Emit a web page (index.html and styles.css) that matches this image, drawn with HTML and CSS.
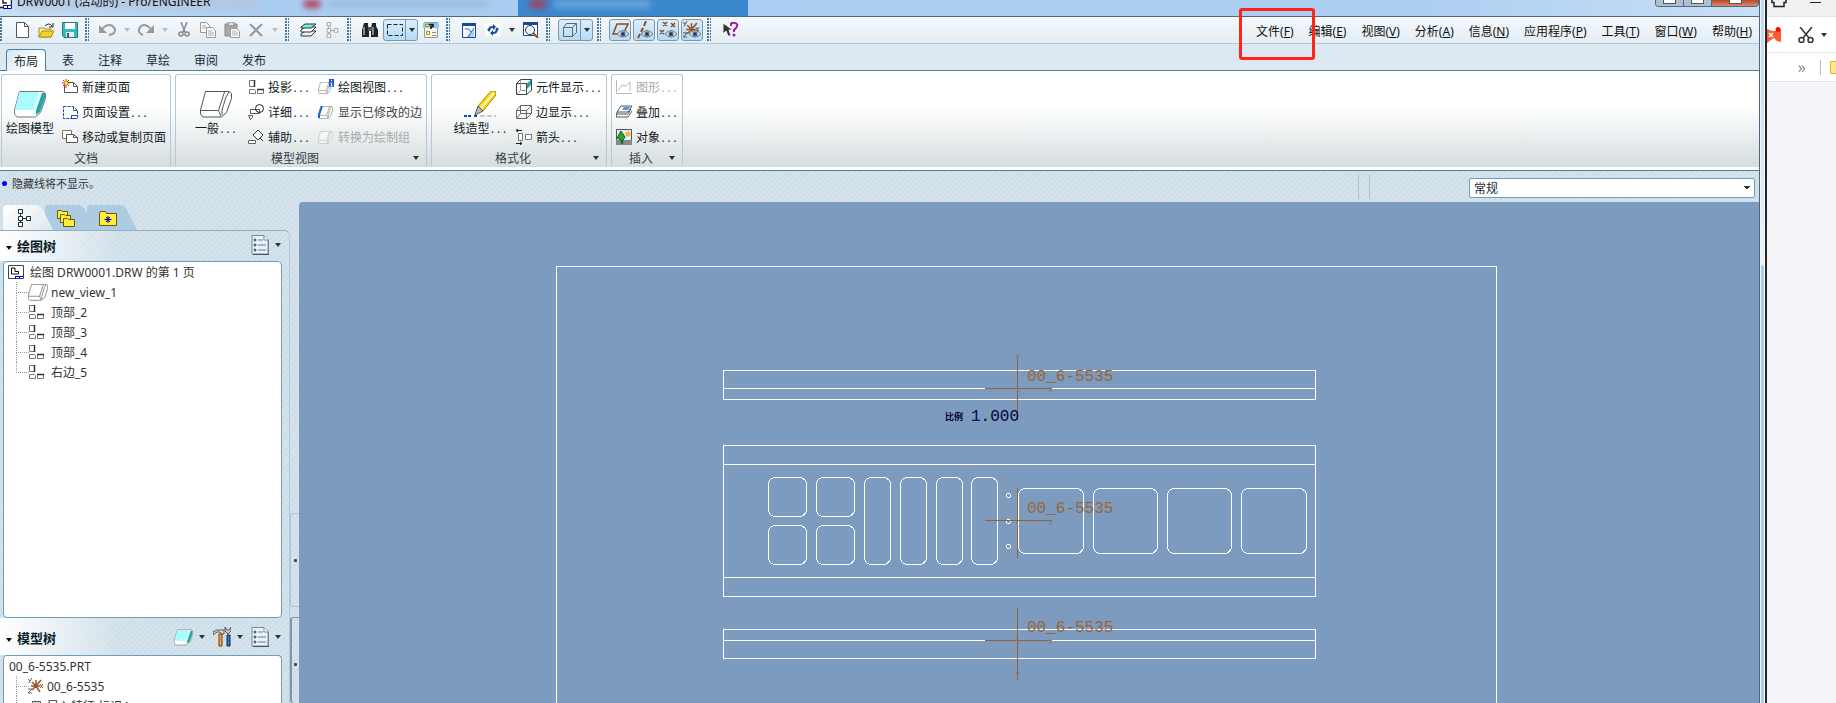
FILE: index.html
```html
<!DOCTYPE html>
<html lang="zh-CN">
<head>
    <meta charset="UTF-8">
    <meta name="viewport" content="width=device-width, initial-scale=1.0">
    <title>DRW0001 (活动的) - Pro/ENGINEER</title>
    <link rel="stylesheet" href="styles.css">
</head>

<body>
    <!-- Shared icons -->
    <svg class="defs" aria-hidden="true">
        <symbol id="i-view" viewBox="0 0 16 16">
            <g fill="#fff" stroke="#777"><path d="M1.500 1.500h5v6h-5z"/><path d="M1.500 10.500h5l1 1v3h-6z"/><path d="M9.500 10.500h6v4h-6z"/></g>
            <path d="M6.500 1v7M9 10.500h7" stroke="#333" stroke-width="1.500" fill="none"/>
        </symbol>
        <symbol id="i-block" viewBox="0 0 32 27">
            <path d="M5.500.5H29l2.500 2v5l-5 14-5 4.500H3L.5 23v-4z" fill="#fff" stroke="#555"/>
            <path d="M.5 19.500h18l2.500 6M24.500 1l-6 18.500M29 1l-3 5-4 13v5" fill="none" stroke="#555"/>
        </symbol>
        <symbol id="i-solid" viewBox="0 0 32 27">
            <path d="M5.500.5H29l2.500 2v5l-5 14-5 4.500H3L.5 23v-4z" fill="#fff" stroke="#777"/>
            <path d="M5.500 1H25l-6 18H1z" fill="#a9fbfd"/>
            <path d="M28 2h3v5l-5 14-4 3v-5z" fill="#22a8a8"/>
            <path d="M26.500 2l-6 18 1 4" fill="none" stroke="#d7ffff" stroke-width="2"/>
        </symbol>
        <symbol id="i-list" viewBox="0 0 18 20">
            <path d="M1 .5h12l4 4V19H1z" fill="#e9f2fc" stroke="#789"/>
            <path d="M13 .5V5h4" fill="#fff" stroke="#789"/>
            <path d="M7 5h5M7 10h8M7 15h8" stroke="#678"/>
            <g fill="#fff" stroke="#234"><circle cx="4" cy="5" r="1"/><circle cx="4" cy="10" r="1"/><circle cx="4" cy="15" r="1"/></g>
            <path d="M2 19.500h16V5" fill="none" stroke="#456"/>
        </symbol>
        <symbol id="i-eye" viewBox="0 0 12 8">
            <path d="M0 4q6-7 12 0-6 6-12 0z" fill="#ddd" stroke="#777"/><circle cx="6" cy="4" r="2.500" fill="#3b6b9c"/><circle cx="6" cy="4" r="1" fill="#123"/>
        </symbol>
        <symbol id="i-csys" viewBox="0 0 16 16">
            <path d="M8 8V2M8 8l5-6M3 8h9M8 8l4 6M8 8l-4 4M8 8L4 4" stroke="#9a5523" stroke-width="1.500"/>
            <path d="M0 1l2 2 2-3M2 3l-1 2M12 6l3 4m0-4l-3 4M0 11h4l-4 4h4" stroke="#666" fill="none"/>
        </symbol>
        <symbol id="i-tree" viewBox="0 0 16 18">
            <path d="M4.500 4v10M4 9.500h7" stroke="currentColor"/>
            <g fill="#fff" stroke="currentColor"><path d="M2.500.5h4v4h-4zM2.500 7.500h4v4h-4zM2.500 13.500h4v4h-4zM10.500 7.500h4v4h-4z"/></g>
        </symbol>
    </svg>

    <div class="app">
        <header class="title-bar">
            <div class="glass" aria-hidden="true">
                <i class="smudge"></i><i class="red"></i><i class="words"></i>
                <div class="glass-tab"><i class="red"></i><i class="words"></i></div>
            </div>
            <svg width="12" height="9" viewBox="0 0 12 9"><path d="M0 0h11v7H0z" fill="#fff"/><path d="M0 7.500h4M11.500 0v5M3 0v3h4" stroke="#222" stroke-width="1.500" fill="none"/><path d="M3.500 5.500h8v3h-8zM7.500 5v3" fill="#fff" stroke="#00c"/></svg>
            <h1>DRW0001 (活动的) - Pro/ENGINEER</h1>
            <div class="window-buttons">
                <button aria-label="最小化"></button>
                <button aria-label="最大化"></button>
                <button class="close" aria-label="关闭"></button>
            </div>
        </header>

        <div class="toolbar">
            <span class="grip first"></span>
            <button aria-label="新建"><svg width="16" height="16"><path d="M2.500.5h8l4 4v11h-12z" fill="#fff" stroke="#555"/><path d="M10.500.5v4h4" fill="none" stroke="#555"/></svg></button>
            <button aria-label="打开"><svg width="16" height="16"><path d="M1 6h5l1 1h6v8H1z" fill="#fff3a0" stroke="#a88a20"/><path d="M4 9h12l-3 6H1z" fill="#f3d420" stroke="#a88a20"/><path d="M7 4q4-4 7 0m1-3v4h-4" fill="none" stroke="#222"/></svg></button>
            <button aria-label="保存"><svg width="16" height="16"><path d="M.5.5h15v15H2l-1.500-2z" fill="#35b9c0" stroke="#33767b"/><path d="M3 1h10v6H3z" fill="#fff"/><path d="M4 10h8v5H4z" fill="#e8eeee"/><path d="M5 11h2v4H5z" fill="#266"/></svg></button>
            <span class="grip"></span>
            <button aria-label="撤消"><svg width="18" height="14"><path d="M3 6q8-8 13 0 1 5-6 6" fill="none" stroke="#999" stroke-width="2"/><path d="M0 2v8h8z" fill="#999"/></svg></button>
            <button class="drop off" aria-label="撤消列表"></button>
            <button aria-label="重做"><svg width="18" height="14"><path d="M14 6Q6-2 2 6q-1 4 4 6" fill="none" stroke="#999" stroke-width="2"/><path d="M17 2v8H9z" fill="#999"/></svg></button>
            <button class="drop off" aria-label="重做列表"></button>
            <button aria-label="剪切"><svg width="16" height="16"><path d="M5 0l4 10M11 0L7 10" stroke="#888" stroke-width="1.500"/><g fill="none" stroke="#888" stroke-width="1.500"><circle cx="5" cy="12" r="2"/><circle cx="11" cy="12" r="2"/></g></svg></button>
            <button aria-label="复制"><svg width="16" height="16"><g fill="#fafafa" stroke="#999"><path d="M.5.5h6l3 3v7h-9z"/><path d="M6.500 5.500h6l3 3v7h-9z"/></g><path d="M2 4h4M2 6h5M8 9h4M8 11h6M8 13h6" stroke="#aaa"/></svg></button>
            <button aria-label="粘贴"><svg width="16" height="16"><path d="M1 2h12v12H1z" fill="#aaa" stroke="#888"/><path d="M4 0h6v4H4z" fill="#ddd" stroke="#888"/><path d="M6.500 6.500h6l3 3v6h-9z" fill="#fff" stroke="#999"/><path d="M8 9h4M8 11h6M8 13h6" stroke="#aaa"/></svg></button>
            <button aria-label="删除"><svg width="16" height="16"><path d="M2 2l12 12M14 2L2 14" stroke="#999" stroke-width="2"/></svg></button>
            <button class="drop off" aria-label="删除列表"></button>
            <span class="grip"></span>
            <button aria-label="层"><svg width="16" height="16"><g stroke="#333"><path d="M1 12l4-3h11l-5 5H1z" fill="#eee"/><path d="M1 8l4-3h11l-5 5H1z" fill="#fff"/><path d="M1 5l4-3h11l-5 4H1z" fill="#6ff0f0"/></g></svg></button>
            <button class="grey" aria-label="模型树"><svg width="16" height="16"><use href="#i-tree"/></svg></button>
            <span class="grip"></span>
            <button aria-label="查找"><svg width="18" height="16"><path d="M3 1h4v3l1 3v8H1V8zM11 1h4v3l2 4v7h-7V7z" fill="#222"/><path d="M7 5h4v4H7z" fill="#555"/><path d="M3 5v8M12 5v8" stroke="#eee"/></svg></button>
            <div class="pressed split">
                <button aria-label="选取框"><svg width="16" height="12"><path d="M.5.5h15v11H.5z" fill="none" stroke="#222" stroke-dasharray="4 2"/></svg></button>
                <button class="drop" aria-label="选取列表"></button>
            </div>
            <button aria-label="过滤器"><svg width="16" height="16"><path d="M1.500.5h13v15h-13z" fill="#f4f4ee" stroke="#999"/><path d="M0 1h16v5H0z" fill="#8ecbfa"/><path d="M6 2.500h4v2H8V7" fill="none" stroke="#111" stroke-width="1.500"/><path d="M2.500 2.500h3v2h-3zM3.500 9.500h3v3h-3z" fill="#ff5" stroke="#a90"/><path d="M9 10.500h4M9 13.500h4" stroke="#888"/></svg></button>
            <span class="grip"></span>
            <button aria-label="重画"><svg width="16" height="16"><path d="M1.500 1.500h13v14h-13z" fill="#f2faff" stroke="#1b4699"/><path d="M1 1h14v3H1z" fill="#1b4699"/><path d="M13 6v9H6z" fill="#9ed6f5"/><path d="M13 6L7 15M4 7h4l2 3" stroke="#3b65bd" fill="none"/></svg></button>
            <button aria-label="刷新"><svg width="16" height="16"><path d="M0 1h16v13H0z" fill="#fffff2"/><path d="M4 8q0-3 4-3M12 7q0 4-4 4" fill="none" stroke="#124caa" stroke-width="2"/><path d="M8 2l3 3-3 3zM8 8l-3 3 3 3zM2 7h4l-2 3zM10 8h4l-2-3z" fill="#124caa"/></svg></button>
            <button class="drop" aria-label="刷新列表"></button>
            <button aria-label="重新调整"><svg width="16" height="16"><path d="M.5.5h14v13H.5z" fill="#fff" stroke="#1b4699"/><path d="M0 0h15v3H0z" fill="#1b4699"/><circle cx="7" cy="8" r="4.500" fill="#edf7fb" stroke="#333"/><path d="M10 11l5 5" stroke="#8b5520" stroke-width="2"/></svg></button>
            <span class="grip"></span>
            <div class="pressed split">
                <button aria-label="隐藏线"><svg width="16" height="14"><path d="M1.500 4.500h9v9h-9zM1.500 4.500l3-4h10l-4 4M14.500.5v9l-4 4" fill="none" stroke="#666"/></svg></button>
                <button class="drop" aria-label="显示列表"></button>
            </div>
            <span class="grip"></span>
            <button class="pressed" aria-label="基准平面"><svg width="18" height="18"><path d="M6 3h11l-5 10H2z" fill="none" stroke="#8d4b20" stroke-width="1.500"/><use href="#i-eye" x="6" y="9" width="12" height="8"/></svg></button>
            <button class="pressed" aria-label="基准轴"><svg width="18" height="18"><path d="M11 0l-2 5M8 7L6 11M5 13l-2 4" stroke="#8d4b20" stroke-width="2"/><use href="#i-eye" x="6" y="9" width="12" height="8"/></svg></button>
            <button class="pressed" aria-label="基准点"><svg width="18" height="18"><path d="M4 1l4 4m0-4L4 5M12 2l4 4m0-4l-4 4M1 9l4 4m0-4l-4 4" stroke="#8d4b20" stroke-width="1.500"/><use href="#i-eye" x="6" y="9" width="12" height="8"/></svg></button>
            <button class="pressed" aria-label="坐标系"><svg width="18" height="18"><use href="#i-csys" width="17" height="17"/><use href="#i-eye" x="6" y="9" width="12" height="8"/></svg></button>
            <span class="grip"></span>
            <button aria-label="帮助"><svg width="18" height="16"><path d="M2 1v11l3-3 2 5h3L8 8h4z" fill="#333" stroke="#eee"/><path d="M10 4V2q1-2 4-1 4 1 1 5l-2 2v2" fill="none" stroke="#a515a5" stroke-width="2"/><circle cx="13" cy="13" r="1.500" fill="#a515a5"/></svg></button>

            <nav class="menu">
                <a href="#" class="marked">文件(<u>F</u>)</a>
                <a href="#">编辑(<u>E</u>)</a>
                <a href="#">视图(<u>V</u>)</a>
                <a href="#">分析(<u>A</u>)</a>
                <a href="#">信息(<u>N</u>)</a>
                <a href="#">应用程序(<u>P</u>)</a>
                <a href="#">工具(<u>T</u>)</a>
                <a href="#">窗口(<u>W</u>)</a>
                <a href="#">帮助(<u>H</u>)</a>
            </nav>
        </div>

        <div class="tabs">
            <button class="active">布局</button>
            <button>表</button>
            <button>注释</button>
            <button>草绘</button>
            <button>审阅</button>
            <button>发布</button>
        </div>

        <div class="ribbon">
            <section class="group doc">
                <div class="tools">
                    <button class="big"><svg width="32" height="27"><use href="#i-solid"/></svg><span>绘图模型</span></button>
                    <div class="col">
                        <button><svg width="16" height="16"><path d="M2.500 3.500h9l4 4v6h-13z" fill="#fff" stroke="#555"/><path d="M11.500 3.500v4h4" fill="none" stroke="#555"/><path d="M4 0v9M0 4h8M1 1l6 6M7 1L1 7" stroke="#c30"/><path d="M2.500 2.500h3v3h-3z" fill="#fe3"/></svg><span>新建页面</span></button>
                        <button><svg width="16" height="16"><path d="M1.500 2.500h10l4 4v8h-14z" fill="#fff" stroke="#1c49ae" stroke-dasharray="3 1"/><path d="M11.500 2.500v4h4" fill="none" stroke="#555"/><path d="M15 14.500H9.500v-3h6" fill="none" stroke="#1c49ae"/></svg><span>页面设置<span class="dots">...</span></span></button>
                        <button><svg width="16" height="16"><path d="M.5 1.500h9v8h-9z" fill="#fffde5" stroke="#777"/><path d="M4.500 5.500h7l4 3v5h-11z" fill="#fff" stroke="#555"/><path d="M11.500 5.500v3h4" fill="none" stroke="#555"/></svg><span>移动或复制页面</span></button>
                    </div>
                </div>
                <footer><h2>文档</h2></footer>
            </section>

            <section class="group views">
                <div class="tools">
                    <button class="big"><svg width="32" height="27"><use href="#i-block"/></svg><span>一般<span class="dots">...</span></span></button>
                    <div class="col">
                        <button><svg width="16" height="16"><use href="#i-view"/></svg><span>投影<span class="dots">...</span></span></button>
                        <button><svg width="16" height="16"><path d="M2.500 5.500h9v4h-9zM.5 11.500h4v2l-2 2z" fill="#fff" stroke="#555"/><circle cx="11.500" cy="4.500" r="4" fill="none" stroke="#222"/></svg><span>详细<span class="dots">...</span></span></button>
                        <button><svg width="16" height="16"><path d="M.5 11.500h7v3h-7z" fill="#fff" stroke="#666"/><path d="M10 1l5 5-5 5-5-5zM12 9l3 3" fill="#fff" stroke="#333"/></svg><span>辅助<span class="dots">...</span></span></button>
                    </div>
                    <div class="col">
                        <button><svg width="16" height="16"><use href="#i-block" y="3" width="14" height="12"/><path d="M11 0h5v8h-5z" fill="#215ec9"/><path d="M13.500 1v1m-1 2h1v3m-1 0h2" stroke="#fff" fill="none"/></svg><span>绘图视图<span class="dots">...</span></span></button>
                        <button class="dim"><svg width="16" height="16"><use href="#i-block" y="2" width="15" height="13"/><path d="M4 2L1 11v3" fill="none" stroke="#16d" stroke-width="2"/></svg><span>显示已修改的边</span></button>
                        <button disabled><svg width="16" height="16"><use href="#i-block" y="2" width="15" height="13"/></svg><span>转换为绘制组</span></button>
                    </div>
                </div>
                <footer><h2>模型视图</h2><button class="drop" aria-label="更多"></button></footer>
            </section>

            <section class="group format">
                <div class="tools">
                    <button class="big"><svg width="32" height="27"><path d="M0 25h8M10 25h4" stroke="#124caa" stroke-width="2" stroke-dasharray="3 1"/><path d="M16 25h16" stroke="#999" stroke-dasharray="5 2"/><path d="M14 15L27 0h5v4L19 20z" fill="#f5d91a" stroke="#a8860b"/><path d="M17 17L30 2" stroke="#fffbb0" stroke-width="2"/><path d="M14 15l5 5-8 4z" fill="#bbb" stroke="#555"/></svg><span>线造型<span class="dots">...</span></span></button>
                    <div class="col">
                        <button><svg width="16" height="16"><path d="M.5 4.500h10v11H.5zM.5 4.500l4-4h11l-5 4v11l5-4V.5" fill="#fff" stroke="#444"/><path d="M5 1h10l-4 3H2z" fill="#fff"/><path d="M11 5l4-4v5l-4 4z" fill="#1ba8a8"/><path d="M4.500 1v10M4.500 11.500h6M.5 15.500l4-4" fill="none" stroke="#999"/></svg><span>元件显示<span class="dots">...</span></span></button>
                        <button><svg width="16" height="16"><path d="M.5 6.500h10v8H.5zM.5 6.500l4-5h11l-5 5v8l5-5v-8M4.500 1.500v8h11M.5 14.500l4-5" fill="none" stroke="#666"/></svg><span>边显示<span class="dots">...</span></span></button>
                        <button><svg width="16" height="16"><path d="M0 1.500h6M2 0L0 1.500 2 3M0 14.500h6M4 13l2 1.500L4 16" stroke="#222" fill="none"/><path d="M2.500 4.500h4v7h-4zM9.500 5.500h6v5h-6z" fill="#fff" stroke="#777"/></svg><span>箭头<span class="dots">...</span></span></button>
                    </div>
                </div>
                <footer><h2>格式化</h2><button class="drop" aria-label="更多"></button></footer>
            </section>

            <section class="group insert">
                <div class="tools">
                    <div class="col">
                        <button disabled><svg width="16" height="16"><path d="M.5 1v13.500H16M2 12l4-6 4 1 4-4v9" fill="none" stroke="#777"/></svg><span>图形<span class="dots">...</span></span></button>
                        <button><svg width="16" height="16"><path d="M5 2h11l-4 6H1z" fill="#fff" stroke="#555"/><path d="M8 3h6l-2 3H6z" fill="#4a9ae0"/><path d="M1 10h11l3-5M1 13h11l4-6M1 8l-1 6" fill="none" stroke="#555"/></svg><span>叠加<span class="dots">...</span></span></button>
                        <button><svg width="16" height="16"><path d="M.5.5h15v15H.5z" fill="#dceffb" stroke="#555"/><path d="M0 11h16v5H0z" fill="#888"/><path d="M5 2l4 6-2 3-1 4-1-4-4-2z" fill="#2ea42e" stroke="#125c12"/><circle cx="12" cy="5" r="2.500" fill="#ffb52b"/></svg><span>对象<span class="dots">...</span></span></button>
                    </div>
                </div>
                <footer><h2>插入</h2><button class="drop" aria-label="更多"></button></footer>
            </section>
        </div>

        <div class="status">
            <p>隐藏线将不显示。</p>
            <span class="sep"></span>
            <select aria-label="过滤器">
                <option>常规</option>
            </select>
        </div>

        <main>
            <aside>
                <div class="side-tabs">
                    <button class="active" aria-label="模型树"><svg width="18" height="18"><use href="#i-tree"/></svg></button>
                    <button aria-label="文件夹浏览器"><svg width="18" height="18"><g fill="#ffef38" stroke="#665a10"><path d="M.5 1.500h4l1 1h5v7H.5z"/><path d="M3.500 5.500h4l1 1h5v7h-10z"/><path d="M6.500 9.500h4l1 1h6v7h-11z"/></g></svg></button>
                    <button aria-label="收藏夹"><svg width="18" height="16"><path d="M.5 3.500l1-2h5l1 2h10v12H.5z" fill="#ffef38" stroke="#665a10"/><path d="M9 6v7M5.500 9.500h7M7 7l4 5M11 7l-4 5" stroke="#00a"/></svg></button>
                </div>
                <div class="side-body">
                    <div class="panel">
                        <div class="panel-head">
                            <h2>绘图树</h2>
                            <button class="with-drop" aria-label="设置"><svg width="18" height="20"><use href="#i-list"/></svg></button>
                        </div>
                        <div class="tree drawing">
                            <div class="root"><svg width="16" height="15"><path d="M.5.5h15v13H.5z" fill="#fff" stroke="#444"/><path d="M3.500 3v6h7V6.500H7V3z" fill="#fff" stroke="#111"/><path d="M7 11.500h8.500M7.500 11v3M11.500 11v3" stroke="#00c"/></svg>绘图 DRW0001.DRW 的第 1 页</div>
                            <ul>
                                <li><svg width="20" height="17"><use href="#i-block"/></svg>new_view_1</li>
                                <li><svg width="16" height="16"><use href="#i-view"/></svg>顶部_2</li>
                                <li><svg width="16" height="16"><use href="#i-view"/></svg>顶部_3</li>
                                <li><svg width="16" height="16"><use href="#i-view"/></svg>顶部_4</li>
                                <li><svg width="16" height="16"><use href="#i-view"/></svg>右边_5</li>
                            </ul>
                        </div>
                        <div class="panel-head second">
                            <h2>模型树</h2>
                            <button class="with-drop" aria-label="显示"><svg width="19" height="17"><use href="#i-solid"/></svg></button>
                            <button class="with-drop" aria-label="工具"><svg width="18" height="20"><path d="M0 5l4-2h7v4H9L7 5H4L0 8z" fill="#ddd" stroke="#555"/><path d="M6 7h3v12H6z" fill="#f0ad2a" stroke="#8b2b12"/><path d="M14 8h3v11h-3z" fill="#3b75d5" stroke="#124"/><path d="M12 0v4l3 3 3-3V0l-2 3h-2z" fill="#ccc" stroke="#555"/></svg></button>
                            <button class="with-drop" aria-label="设置"><svg width="18" height="20"><use href="#i-list"/></svg></button>
                        </div>
                        <div class="tree model">
                            <div class="root">00_6-5535.PRT</div>
                            <ul>
                                <li><svg width="16" height="16"><use href="#i-csys"/></svg>00_6-5535</li>
                                <li><svg width="16" height="16"><path d="M4.500 3.500h8v9h-8z" fill="#ddd" stroke="#555"/></svg>导入特征 标识4</li>
                            </ul>
                        </div>
                    </div>
                    <div class="splitter">
                        <span></span>
                        <span class="lower"></span>
                    </div>
                </div>
            </aside>

            <div class="canvas">
                <svg class="sheet" width="1460" height="501" viewBox="299 202 1460 501">
                    <g class="lines">
                        <path d="M556.500 720V266.500h940V720"/>
                        <path d="M723.500 370.500h592v29h-592zM723.500 388.500h592"/>
                        <path d="M723.500 445.500h592v151h-592zM723.500 464.500h592M723.500 577.500h592"/>
                        <path d="M723.500 629.500h592v29h-592zM723.500 640.500h592"/>
                        <rect x="768.500" y="477.500" width="38" height="39" rx="7"/>
                        <rect x="816.500" y="477.500" width="38" height="39" rx="7"/>
                        <rect x="768.500" y="525.500" width="38" height="39" rx="7"/>
                        <rect x="816.500" y="525.500" width="38" height="39" rx="7"/>
                        <rect x="864.500" y="477.500" width="26" height="87" rx="7"/>
                        <rect x="900.500" y="477.500" width="26" height="87" rx="7"/>
                        <rect x="936.500" y="477.500" width="26" height="87" rx="7"/>
                        <rect x="971.500" y="477.500" width="26" height="87" rx="7"/>
                        <rect x="1018.500" y="488.500" width="65" height="65" rx="7"/>
                        <rect x="1093.500" y="488.500" width="64" height="65" rx="7"/>
                        <rect x="1167.500" y="488.500" width="64" height="65" rx="7"/>
                        <rect x="1241.500" y="488.500" width="65" height="65" rx="7"/>
                        <circle cx="1008.500" cy="495.500" r="2"/>
                        <circle cx="1008.500" cy="521.500" r="2"/>
                        <circle cx="1008.500" cy="546.500" r="2"/>
                    </g>
                    <g class="axes">
                        <path d="M1017.500 356v64M985 388.500h67"/>
                        <path d="M1017.500 488v70M985 520.500h67"/>
                        <path d="M1017.500 608v72M985 640.500h67"/>
                        <path class="faint" d="M1016 354l1.500 3 2-3M1049 387l3 5m0-5l-3 5M1049 520l3 5m0-5l-3 5M1049 639l3 5m0-5l-3 5M1016 672l1.500 4 2-4M1016 387l3 5M1016 520l2 7M1016 638l3 6"/>
                    </g>
                    <g class="csys">
                        <text x="1027" y="381">00_6-5535</text>
                        <text x="1027" y="513">00_6-5535</text>
                        <text x="1027" y="632">00_6-5535</text>
                    </g>
                    <text class="scale-cjk" x="945" y="420">比例</text>
                    <text class="scale" x="971" y="421">1.000</text>
                </svg>
            </div>
        </main>
    </div>

    <div class="frame-edge"></div>

    <div class="browser">
        <div class="row top">
            <svg width="24" height="16"><path d="M5 0v2.500h2v4h10v-4h2V0" fill="none" stroke="#222" stroke-width="1.500"/></svg>
            <svg width="12" height="16"><path d="M1 2.500h11" stroke="#222"/></svg>
        </div>
        <div class="row apps">
            <svg width="16" height="16"><path d="M0 2l5 2h5l4-2v13l-4-1-3-3-3 2-4 3z" fill="#ff5a30"/><path d="M2 6l4 4m0-4l-4 4" stroke="#fff" stroke-width="1.500"/><circle cx="11" cy="2.500" r="2.500" fill="#e11"/></svg>
            <svg width="16" height="16"><path d="M2 0l9 11M14 0L5 11" stroke="#333" stroke-width="1.500"/><g fill="none" stroke="#333" stroke-width="1.500"><circle cx="3.500" cy="13" r="2.500"/><circle cx="12.500" cy="13" r="2.500"/></g></svg>
            <button class="drop" aria-label="更多"></button>
        </div>
        <div class="row marks">
            <span>»</span>
            <svg width="6" height="13"><path d="M.5.5H8v12H.5z" fill="#ffe98a" stroke="#f2b01e"/></svg>
        </div>
    </div>
</body>
</html>
```
FILE: styles.css
```css
* {
    box-sizing: border-box;
}

body {
    margin: 0;
    height: 100vh;
    display: flex;
    overflow: hidden;
    font-family: "Noto Sans", "Noto Sans CJK SC", sans-serif;
    font-size: 12px;
    color: #1c2a33;
}

h1, h2, p, ul {
    margin: 0;
    padding: 0;
    font-size: 12px;
    font-weight: normal;
}

button {
    font: inherit;
    color: inherit;
    padding: 0;
    border: none;
    background: none;
}

svg {
    flex: none;
    display: block;
}

.defs {
    position: absolute;
    width: 0;
    height: 0;
}

.app {
    flex: 1;
    min-width: 0;
    display: flex;
    flex-direction: column;
    background: #cfdfe9;
}

/* Title bar */
.title-bar {
    position: relative;
    height: 17px;
    display: flex;
    gap: 5px;
    border-bottom: 1px solid #53657a;
    background: linear-gradient(to right, #c8dff5, #a9cdf1 15%, #accef1 80%, #c9dff6);
    overflow: hidden;
}

.title-bar h1 {
    position: relative;
    flex: 1;
    line-height: 4px;
    color: #111;
}

.title-bar > svg {
    position: relative;
}

.glass {
    position: absolute;
    inset: 0 0 0 20px;
    display: flex;
    gap: 8px;
}

.glass i {
    height: 8px;
    filter: blur(3px);
}

.glass .smudge {
    width: 240px;
    margin-right: 36px;
    background: #b4c6dc;
}

.glass .red {
    width: 16px;
    background: #ad3c56;
}

.glass .words {
    width: 160px;
    margin-right: 22px;
    background: #9dbbdc;
}

.glass-tab {
    width: 230px;
    display: flex;
    gap: 8px;
    padding-left: 12px;
    background: #3b87cd;
}

.glass-tab .words {
    width: 96px;
    background: #6ba6dc;
}

.window-buttons {
    display: flex;
    height: 7px;
    border: 1px solid #536680;
    border-top: none;
    border-radius: 0 0 4px 4px;
    overflow: hidden;
}

.window-buttons button {
    width: 28px;
    background: #aebfd2;
    border-right: 1px solid #536680;
}

.window-buttons button::after {
    content: "";
    display: block;
    width: 11px;
    height: 3px;
    margin: 0 auto 3px;
    background: #fff;
    border: 1px solid #555;
    border-top: none;
}

.window-buttons .close {
    width: 46px;
    border-right: none;
    background: linear-gradient(#b4482f, #dc8a6d);
}

/* Toolbar */
.toolbar {
    height: 27px;
    display: flex;
    align-items: center;
    background: linear-gradient(#f4f9fc, #e4edf4);
    border-bottom: 1px solid #b6c8d3;
}

.toolbar > button {
    width: 24px;
    height: 22px;
    display: flex;
    align-items: center;
    justify-content: center;
}

.grip {
    width: 4px;
    height: 24px;
    margin: 0 7px 0 3px;
    background: radial-gradient(circle at 1px 1px, #47799f 1px, transparent 1px) 0 0 / 3px 3px;
}

.grip.first {
    margin-left: 0;
    width: 3px;
}

.grey {
    color: #999;
}

.toolbar > .drop {
    width: 14px;
}

.drop::after,
.with-drop::after {
    content: "";
    display: block;
    width: 0;
    margin: 0 auto;
    border: 3px solid transparent;
    border-top: 4px solid #333;
    border-bottom: none;
}

.drop.off::after {
    border-top-color: #bbb;
}

.pressed {
    border: 1px solid #7b98b0;
    border-radius: 3px;
    background: linear-gradient(#dceefb, #b4dbf6);
}

.toolbar > .pressed {
    width: 22px;
    margin: 0 1px;
}

.toolbar > .split {
    width: 35px;
    height: 22px;
    display: flex;
}

.split button {
    flex: 1;
    display: flex;
    align-items: center;
    justify-content: center;
}

.split .drop {
    flex: 0 0 12px;
    border-left: 1px solid #7b98b0;
}

.menu {
    margin-left: auto;
    padding: 3px 7px 0 0;
    display: flex;
    gap: 15px;
}

.menu a {
    position: relative;
    color: #111;
    text-decoration: none;
    line-height: 18px;
    white-space: nowrap;
}

/* red highlight round the File menu */
.menu .marked::after {
    content: "";
    position: absolute;
    inset: -15px -21px -19px -17px;
    border: 3px solid #ff2417;
    border-radius: 3px;
    z-index: 2;
}

/* Ribbon tabs */
.tabs {
    height: 27px;
    padding: 5px 6px 0;
    display: flex;
    gap: 8px;
    background: #dce9f2;
    border-bottom: 1px solid #4f7f9f;
}

.tabs button {
    padding: 0 8px;
    height: 22px;
}

.tabs .active {
    padding: 0 7px;
    border: 1px solid #4f7f9f;
    border-bottom: none;
    border-radius: 4px 4px 0 0;
    background: linear-gradient(135deg, #d5e5ef, #fff 70%);
}

/* Ribbon */
.ribbon {
    height: 100px;
    display: flex;
    gap: 4px;
    padding: 3px 1px;
    background: linear-gradient(#fff 36px, #d5dddf 96px, #fff 96px);
    border-bottom: 1px solid #4f7f9f;
}

.group {
    display: flex;
    flex-direction: column;
    border: 1px solid #b4c8d6;
    border-bottom: none;
    border-radius: 3px;
    padding: 0 4px;
}

.doc {
    width: 170px;
}

.views {
    width: 252px;
}

.format {
    width: 176px;
}

.insert {
    width: 72px;
}

.tools {
    display: flex;
    height: 74px;
}

.tools button {
    display: flex;
    align-items: center;
    gap: 4px;
    height: 25px;
    padding-bottom: 2px;
    white-space: nowrap;
    color: #101c24;
}

.tools .dim {
    color: #444;
}

.tools button:disabled {
    color: #aaa;
}

.tools button:disabled svg {
    opacity: 0.5;
}

.tools .big {
    flex-direction: column;
    gap: 2px;
    height: 74px;
    padding-top: 16px;
    line-height: 18px;
}

.doc .big {
    width: 48px;
    margin-right: 8px;
}

.views .big {
    width: 48px;
    margin: 0 10px 0 14px;
}

.views .col + .col {
    margin-left: 8px;
}

.format .big {
    width: 60px;
    margin: 0 6px 0 15px;
}

.dots {
    font-family: "Liberation Mono", monospace;
    font-size: 10px;
}

.group footer {
    display: flex;
    align-items: center;
    justify-content: center;
    height: 18px;
    color: #333f47;
}

.group h2 {
    flex: 1;
    text-align: center;
}

.group .drop {
    width: 12px;
}

/* Message row */
.status {
    height: 31px;
    display: flex;
    padding: 4px 4px 0 2px;
}

.status, aside {
    background: repeating-linear-gradient(135deg, #cddee9 0 2px, #d5e3ec 2px 4px);
}

.status p {
    flex: 1;
    font-size: 11px;
    line-height: 18px;
    color: #333;
}

.status p::before {
    content: "";
    display: inline-block;
    width: 5px;
    height: 5px;
    margin-right: 5px;
    vertical-align: 2px;
    border-radius: 50%;
    background: #00f;
}

.sep {
    width: 12px;
    height: 24px;
    margin-right: 99px;
    border: 1px solid #afbfca;
    border-width: 0 1px;
}

.status select {
    width: 286px;
    height: 20px;
    margin-top: 3px;
    padding: 0 4px;
    font: inherit;
    color: inherit;
    border: 1px solid #6f9ebb;
    border-radius: 2px;
    appearance: none;
    background:
        linear-gradient(45deg, transparent 50%, #333 50%) right 7px center / 3px 4px no-repeat,
        linear-gradient(135deg, #333 50%, transparent 50%) right 4px center / 3px 4px no-repeat,
        #fff;
}

/* Side panel */
main {
    flex: 1;
    min-height: 0;
    display: flex;
}

aside {
    width: 299px;
    display: flex;
    flex-direction: column;
}

.side-tabs {
    display: flex;
    padding: 3px 0 0 3px;
}

.side-tabs button {
    width: 50px;
    height: 25px;
    margin-right: -8px;
    padding: 0 0 0 12px;
    background: #adcbe1;
    clip-path: polygon(0 2px, 2px 0, 35px 0, 39px 3px, 50px 100%, 0 100%);
}

.side-tabs .active {
    z-index: 1;
    background: linear-gradient(135deg, #fff, #dce8f0);
}

.side-body {
    flex: 1;
    min-height: 0;
    display: flex;
}

.panel {
    width: 290px;
    padding: 0 7px 0 3px;
    display: flex;
    flex-direction: column;
    border: 1px solid #9aabb5;
    border-width: 1px 1px 0 0;
    border-right-color: #b9c8d2;
    border-radius: 0 6px 0 0;
}

.panel-head {
    height: 30px;
    margin-left: -3px;
    padding: 0 1px 2px 6px;
    display: flex;
    align-items: center;
    gap: 8px;
    background: linear-gradient(to right, #fff, transparent 120px);
}

.panel-head.second {
    height: 37px;
    padding-top: 3px;
}

.panel-head h2 {
    flex: 1;
    font-weight: bold;
    font-size: 13px;
    color: #0a1e29;
}

.panel-head h2::before {
    content: "";
    display: inline-block;
    margin-right: 5px;
    vertical-align: 1px;
    border: 3px solid transparent;
    border-top: 4px solid #111;
    border-bottom: none;
}

.with-drop {
    display: flex;
    align-items: center;
    gap: 6px;
}

.tree {
    border: 1px solid #6f9ebb;
    border-radius: 4px;
    background: #fff;
    overflow: hidden;
    color: #333;
}

.drawing {
    flex: 1;
    min-height: 0;
}

.model {
    flex: 0 0 48px;
    border-bottom: none;
    border-radius: 4px 4px 0 0;
}

.root {
    display: flex;
    align-items: center;
    gap: 6px;
    height: 20px;
    padding-left: 4px;
}

.model .root {
    padding-left: 5px;
}

.tree ul {
    list-style: none;
    margin-left: 12px;
}

.tree li {
    position: relative;
    display: flex;
    align-items: center;
    gap: 3px;
    height: 20px;
    padding-left: 12px;
}

.drawing li svg {
    margin-right: 4px;
}

.drawing li:first-child svg {
    margin-right: 0;
}

.tree li::before {
    content: "";
    position: absolute;
    left: 0;
    top: 0;
    width: 12px;
    height: 10px;
    border: 1px dotted #999;
    border-width: 0 0 1px 1px;
}

.tree li:not(:last-child)::after {
    content: "";
    position: absolute;
    left: 0;
    top: 10px;
    height: 10px;
    border-left: 1px dotted #999;
}

.splitter {
    flex: 1;
    display: flex;
    flex-direction: column;
    justify-content: flex-end;
    gap: 10px;
}

.splitter span {
    flex: 0 0 94px;
    display: flex;
    align-items: center;
    justify-content: center;
    border: 1px solid #a8c6dc;
    border-right: none;
    border-radius: 3px 0 0 3px;
}

.splitter .lower {
    flex-basis: 86px;
    padding-top: 8px;
    border: 1px solid #8196a5;
    border-width: 1px 0 0 2px;
}

.splitter span::after {
    content: "";
    width: 3px;
    height: 3px;
    border-radius: 1px;
    background: #444;
}

/* Drawing area */
.canvas {
    flex: 1;
    min-width: 0;
    overflow: hidden;
    background: #7d9abf;
    border-radius: 4px 0 0 0;
}

.lines {
    fill: none;
    stroke: #fff;
    shape-rendering: crispEdges;
}

.axes {
    fill: none;
    stroke: #9a5f2f;
}

.faint {
    stroke: #8a7a75;
}

.csys,
.scale {
    font-family: "Liberation Mono", monospace;
    font-size: 16px;
    fill: #9a6535;
}

.scale,
.scale-cjk {
    fill: #03033d;
}

.scale-cjk {
    font-size: 9px;
    font-weight: bold;
}

/* Window frame and the browser behind it */
.frame-edge {
    width: 8px;
    border: 1px solid #53657a;
    border-right: 2px solid #22262b;
    border-width: 0 2px 0 1px;
    background: linear-gradient(#bcd7f3, #e9f2fb 265px, #a9cdf1 266px);
    box-shadow: inset 1px 0 #eef6ff, inset -1px 0 #fff;
}

.browser {
    width: 69px;
    background: #f3f5f8;
}

.row {
    display: flex;
    align-items: center;
    background: #fff;
    border-bottom: 1px solid #e1e5e9;
}

.top {
    height: 17px;
    gap: 18px;
    background: #f1f1f2;
    align-items: flex-start;
}

.apps {
    height: 36px;
    gap: 15px;
}

.apps .drop {
    margin-left: -8px;
}

.marks {
    height: 29px;
    justify-content: flex-end;
    gap: 9px;
}

.marks span {
    padding-right: 14px;
    border-right: 1px solid #bbb;
    font-size: 16px;
    line-height: 15px;
    color: #888;
}
```
